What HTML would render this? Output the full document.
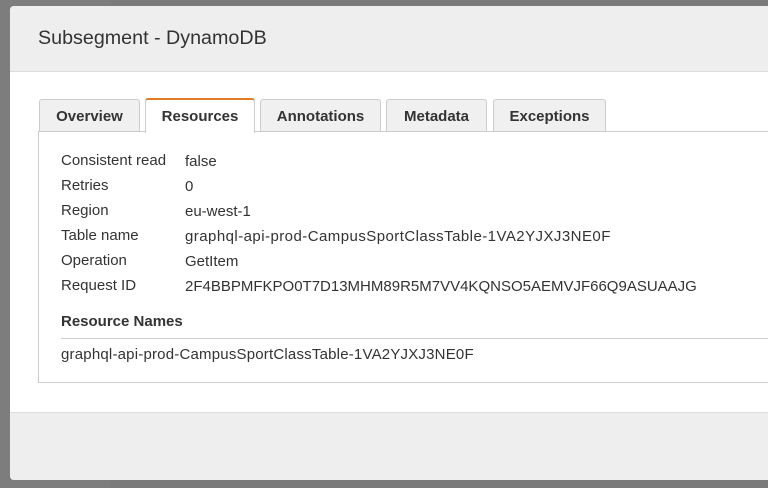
<!DOCTYPE html>
<html><head><style>
body{margin:0;width:768px;height:488px;background:#7a7a7a;position:relative;overflow:hidden;font-family:"Liberation Sans",Arial,sans-serif;color:#333}
.a{position:absolute}
.modal{left:10px;top:6px;width:770px;height:474px;background:#fff;border-radius:4px;overflow:hidden}
.hd{left:0;top:0;width:100%;height:65px;background:#eeeeee;border-bottom:1px solid #ddd}
.ft{left:0;top:406px;width:100%;height:70px;background:#eeeeee;border-top:1px solid #ddd}
.tab{top:93px;height:32px;background:#f0f0f0;border:1px solid #ccc;border-bottom:none;border-radius:3px 3px 0 0;font-weight:bold;font-size:15px;text-align:center;line-height:33px;color:#333;box-sizing:border-box}
.act{background:#fff;border-top:2px solid #e07b28;height:35px;top:92px;line-height:33px}
.panel{left:28px;top:125px;width:760px;height:252px;border:1px solid #ccc;box-sizing:border-box}
.r{font-size:15px;left:51px}
.v{font-size:15px;left:175px}
</style></head><body>
<div class="a" style="left:0;top:0;width:110px;height:488px;background:#7d7d7d"></div>
<div class="a modal">
<div class="a hd"><div class="a" style="left:28px;top:21px;font-size:19.7px;color:#333">Subsegment - DynamoDB</div></div>
<div class="a panel"></div>
<div class="a tab" style="left:29px;width:101px">Overview</div>
<div class="a tab act" style="left:135px;width:110px">Resources</div>
<div class="a tab" style="left:250px;width:121px">Annotations</div>
<div class="a tab" style="left:376px;width:101px">Metadata</div>
<div class="a tab" style="left:483px;width:113px">Exceptions</div>
<div class="a r" style="top:146px">Consistent read</div><div class="a v" style="top:147px">false</div>
<div class="a r" style="top:171px">Retries</div><div class="a v" style="top:172px">0</div>
<div class="a r" style="top:196px">Region</div><div class="a v" style="top:197px">eu-west-1</div>
<div class="a r" style="top:221px">Table name</div><div class="a v" style="top:222px;letter-spacing:0.45px">graphql-api-prod-CampusSportClassTable-1VA2YJXJ3NE0F</div>
<div class="a r" style="top:246px">Operation</div><div class="a v" style="top:247px">GetItem</div>
<div class="a r" style="top:271px">Request ID</div><div class="a v" style="top:272px">2F4BBPMFKPO0T7D13MHM89R5M7VV4KQNSO5AEMVJF66Q9ASUAAJG</div>
<div class="a r" style="top:307px;font-weight:bold">Resource Names</div>
<div class="a" style="left:51px;top:332px;width:720px;height:1px;background:#ccc"></div>
<div class="a r" style="top:340px;letter-spacing:0.2px">graphql-api-prod-CampusSportClassTable-1VA2YJXJ3NE0F</div>
<div class="a ft"></div>
</div>
</body></html>
